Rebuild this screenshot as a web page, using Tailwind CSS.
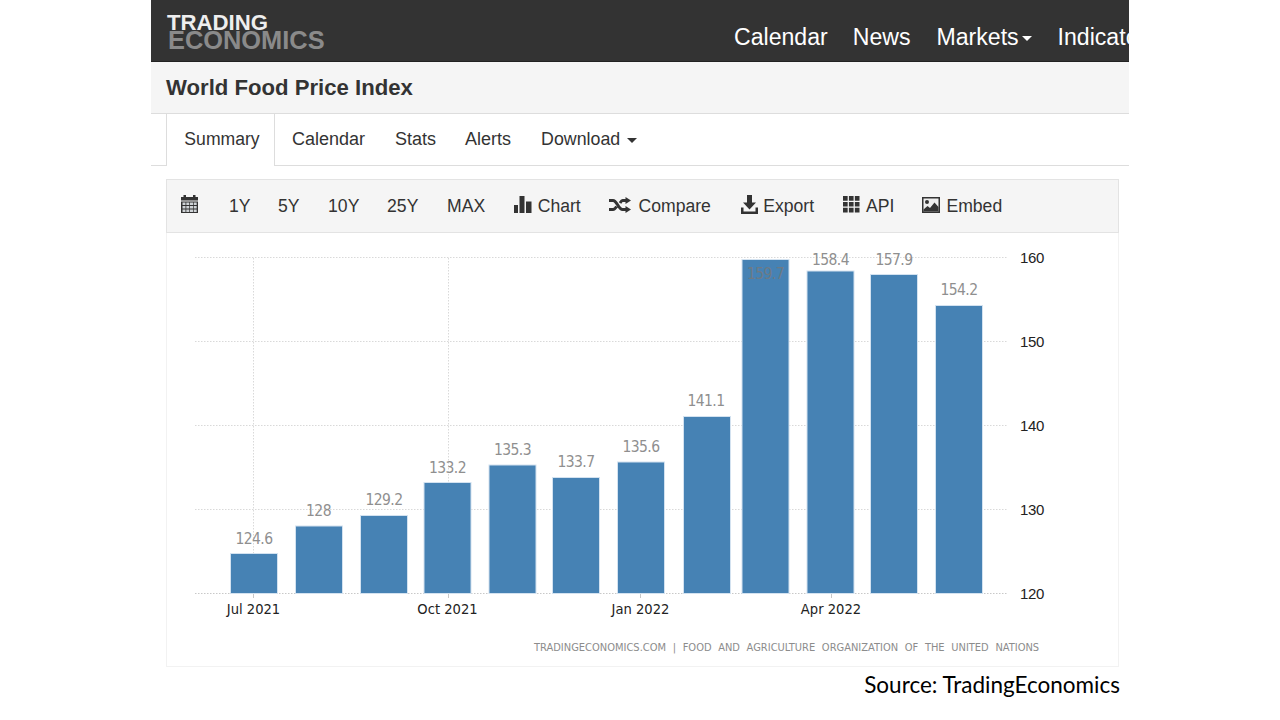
<!DOCTYPE html>
<html lang="en">
  <head>
    <meta charset="UTF-8" />
    <title>World Food Price Index</title>
    <script src="https://cdn.jsdelivr.net/npm/@tailwindcss/browser@4"></script>
  </head>
  <body class="bg-white w-[1280px] h-[720px] overflow-hidden font-['Liberation_Sans',sans-serif] text-[#333]">
    <div class="w-[978px] ml-[151px] overflow-hidden">
      <!-- Navbar -->
      <div class="h-[62px] bg-[#333] border-b border-[#222] flex items-center whitespace-nowrap text-white text-[23.1px]">
        <div class="w-[583px] pl-[16px] mt-[2px] font-bold shrink-0">
          <div class="text-[22.2px] leading-[17px] text-[#eee]">TRADING</div>
          <div class="text-[25.4px] leading-[18px] pl-[1px] text-[#8a8a8a]">ECONOMICS</div>
        </div>
        <span class="mt-[13px]">Calendar</span>
        <span class="ml-[25px] mt-[13px]">News</span>
        <span class="ml-[26px] mt-[13px]">Markets</span>
        <span class="ml-[3px] mt-[15px] border-x-[5px] border-t-[5px] border-x-transparent border-t-white"></span>
        <span class="ml-[26px] mt-[13px]">Indicators</span>
      </div>

      <!-- Title -->
      <div class="h-[52px] bg-[#f5f5f5] border-b border-[#ddd] pl-[15px] flex items-center">
        <h1 class="text-[22.15px] font-bold text-[#333]">World Food Price Index</h1>
      </div>

      <!-- Tabs -->
      <div class="h-[52px] border-b border-[#ddd] pl-[15px] flex text-[18px] text-[#333]">
        <div class="h-[52px] w-[109px] pb-[2px] pl-[3px] bg-white border-x border-[#ddd] flex items-center justify-center text-[17.6px]">Summary</div>
        <div class="ml-[17px] flex items-center">Calendar</div>
        <div class="ml-[30px] flex items-center">Stats</div>
        <div class="ml-[29px] flex items-center">Alerts</div>
        <div class="ml-[30px] flex items-center text-[17.8px]">Download
          <span class="ml-[7px] mt-[2px] border-x-[5px] border-t-[5px] border-x-transparent border-t-[#333]"></span>
        </div>
      </div>

      <!-- Chart panel -->
      <div class="mt-[13px] ml-[15px] w-[953px] h-[488px] border border-[#f2f2f2]">
        <div class="h-[54px] -mx-px -mt-px bg-[#f5f5f5] border border-[#e3e3e3] flex items-center pl-[14px] text-[17.6px] text-[#333] whitespace-nowrap">
          <svg class="w-[17px] h-[18px] -mt-[4px] shrink-0" viewBox="0 0 17 18" fill="#333">
            <path d="M2.500 0h2.500v3H2.500zM12 0h2.500v3H12z" />
            <path d="M0 2h17v3.500H0z" />
            <path d="M0 6.500h17V18H0z" />
            <path d="M1.500 7.500h3v2.500h-3zM5.300 7.500h3v2.500h-3zM9 7.500h3v2.500H9zM12.700 7.500h3v2.500h-3zM1.500 11h3v2.500h-3zM5.300 11h3v2.500h-3zM9 11h3v2.500H9zM12.700 11h3v2.500h-3zM1.500 14.500h3V17h-3zM5.300 14.500h3V17h-3zM9 14.500h3V17H9zM12.700 14.500h3V17h-3z" fill="#cfd3d6" />
          </svg>
          <span class="ml-[31px]">1Y</span>
          <span class="ml-[27.5px]">5Y</span>
          <span class="ml-[28.5px]">10Y</span>
          <span class="ml-[27.7px]">25Y</span>
          <span class="ml-[28.7px]">MAX</span>
          <svg class="ml-[29px] w-[17.5px] h-[17px] -mt-[3px] shrink-0" viewBox="0 0 17.500 17" fill="#333">
            <path d="M0 9h4v8H0zM5.500 0H10.500v17H5.500zM12 5.500h5.500V17H12z" />
          </svg>
          <span class="ml-[6px]">Chart</span>
          <svg class="ml-[28px] w-[22px] h-[16px] -mt-[3px] shrink-0" viewBox="0 0 22 16" fill="none" stroke="#333" stroke-width="3">
            <path d="M0 3.500h4c4 0 5.500 9 9.500 9h3.500M0 12.500h4c1.500 0 2.600-1.400 3.600-3M11 6c1-1.500 1.600-2.500 2.500-2.500h3.500" />
            <path d="M16.500 0l5.500 3.500-5.500 3.500zM16.500 9l5.500 3.500-5.500 3.500z" fill="#333" stroke="none" />
          </svg>
          <span class="ml-[7.800px]">Compare</span>
          <svg class="ml-[29.800px] w-[17px] h-[19px] -mt-[4px] shrink-0" viewBox="0 0 17 19" fill="#333">
            <path d="M6 0h5v7.500h4l-6.500 7-6.500-7h4z" />
            <path d="M0 12.500h2.500v4H14.500v-4H17V19H0z" />
          </svg>
          <span class="ml-[5.500px]">Export</span>
          <svg class="ml-[29px] w-[16.500px] h-[16.500px] -mt-[3px] shrink-0" viewBox="0 0 17 17" fill="#333">
            <path d="M0 0h4.800v4.800H0zM6.100 0h4.800v4.800H6.100zM12.200 0H17v4.800h-4.800zM0 6.100h4.800v4.800H0zM6.100 6.100h4.800v4.800H6.100zM12.200 6.100H17v4.800h-4.800zM0 12.200h4.800V17H0zM6.100 12.200h4.800V17H6.100zM12.200 12.200H17V17h-4.800z" />
          </svg>
          <span class="ml-[6.500px]">API</span>
          <svg class="ml-[27.500px] w-[18px] h-[16px] -mt-[3px] shrink-0" viewBox="0 0 18 16">
            <path d="M0 0h18v16H0z" fill="#333" />
            <path d="M1.500 1.500h15v13h-15z" fill="#eee" />
            <circle cx="5" cy="5" r="2" fill="#333" />
            <path d="M1.500 14.500v-2l4-3.500 2.500 2L12.500 5.500l4 4.500v4.500z" fill="#333" />
          </svg>
          <span class="ml-[6.500px]">Embed</span>
        </div>

        <!-- Chart canvas starts at page x=167, y=233 -->
        <svg class="block" width="951" height="433" viewBox="167 233 951 433" font-family="'DejaVu Sans Condensed','DejaVu Sans',sans-serif">
          <g stroke="#d9d9d9" stroke-dasharray="1.500 1.500" stroke-width="1">
            <path d="M195 257.500H1008M195 341.500H1008M195 425.500H1008M195 509.500H1008" />
            <path d="M253.500 258V593M448.500 258V593M640.500 462V593M831.500 272V593" />
            <path d="M195 593.500H1008" stroke="#c8c8c8" />
          </g>
          <path d="M253.500 594V598M448.500 594V598M640.500 594V598M831.500 594V598" stroke="#c8c8c8" />
          <g fill="#4682b4" stroke="#d3e2f0" stroke-width="1">
            <rect x="230.500" y="553.500" width="47" height="40" />
            <rect x="295.500" y="526" width="47" height="67.500" />
            <rect x="360.500" y="515.500" width="47" height="78" />
            <rect x="424" y="482.500" width="47" height="111" />
            <rect x="489" y="465" width="47" height="128.500" />
            <rect x="552.500" y="477.500" width="47" height="116" />
            <rect x="617.500" y="462" width="47" height="131.500" />
            <rect x="683.500" y="416.500" width="47" height="177" />
            <rect x="742" y="259.500" width="47" height="334" />
            <rect x="807" y="271" width="47" height="322.500" />
            <rect x="870.500" y="274.500" width="47" height="319" />
            <rect x="935.500" y="305.500" width="47" height="288" />
          </g>
          <g fill="#8f8f8f" font-size="15.500" letter-spacing="-0.600" text-anchor="middle">
            <text x="254" y="544">124.6</text>
            <text x="318.500" y="516">128</text>
            <text x="384" y="505">129.2</text>
            <text x="447.500" y="473">133.2</text>
            <text x="512.500" y="455">135.3</text>
            <text x="576" y="467">133.7</text>
            <text x="641" y="452">135.6</text>
            <text x="706" y="406">141.1</text>
            <text x="765.500" y="279" fill="#6d7a85">159.7</text>
            <text x="830.500" y="265">158.4</text>
            <text x="894" y="265">157.9</text>
            <text x="959" y="295">154.2</text>
          </g>
          <g fill="#222" font-size="15" letter-spacing="-0.300" font-family="'Liberation Sans',sans-serif">
            <text x="1020" y="262.500">160</text>
            <text x="1020" y="346.500">150</text>
            <text x="1020" y="430.500">140</text>
            <text x="1020" y="514.500">130</text>
            <text x="1020" y="598.500">120</text>
          </g>
          <g fill="#222" font-size="14.600" text-anchor="middle">
            <text x="253.500" y="613.500">Jul 2021</text>
            <text x="447.500" y="613.500">Oct 2021</text>
            <text x="640.500" y="613.500">Jan 2022</text>
            <text x="831" y="613.500">Apr 2022</text>
          </g>
          <text x="534" y="650.500" font-size="11" fill="#8c8c8c" word-spacing="3.500">TRADINGECONOMICS.COM | FOOD AND AGRICULTURE ORGANIZATION OF THE UNITED NATIONS</text>
        </svg>
      </div>
    </div>
    <div class="w-[1120px] mt-[4px] text-right font-['Lato',sans-serif] text-[22.5px] leading-[28px] text-black">Source: TradingEconomics</div>
  </body>
</html>
